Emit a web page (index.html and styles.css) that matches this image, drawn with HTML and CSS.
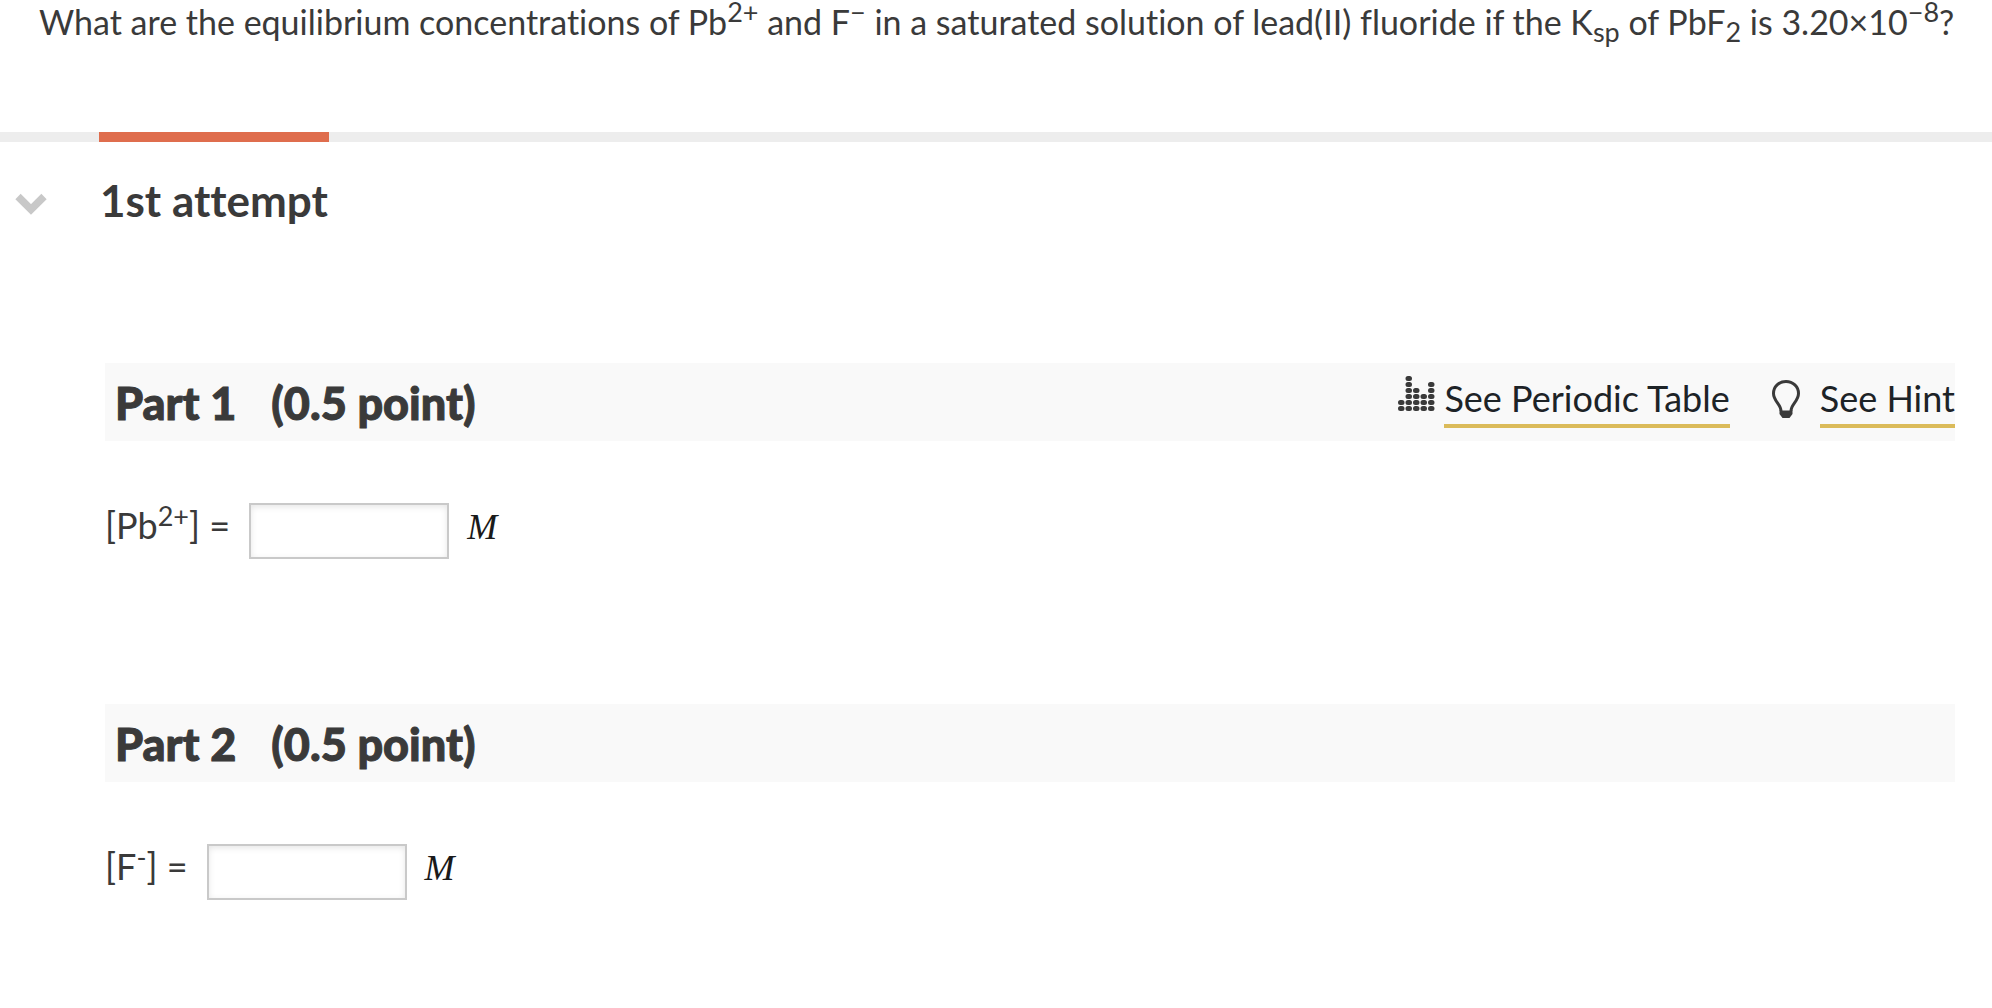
FILE: index.html
```html
<!DOCTYPE html>
<html lang="en">
<head>
<meta charset="utf-8">
<title>Solubility equilibrium question</title>
<link rel="stylesheet" href="styles.css">
</head>
<body>
<main>
  <p class="question">What are the equilibrium concentrations of Pb<sup>2+</sup> and F<sup>−</sup> in a saturated solution of lead(II) fluoride if the K<sub>sp</sub> of PbF<sub>2</sub> is 3.20×10<sup>−8</sup>?</p>

  <section class="attempt">
    <header class="attempt-header">
      <button class="toggle" type="button" aria-label="Collapse attempt" aria-expanded="true">
        <svg width="32" height="22" viewBox="0 0 32 22" aria-hidden="true"><path d="M3 3.5 16 16.500 29 3.500" fill="none" stroke="#c8c8c8" stroke-width="7.500"/></svg>
      </button>
      <h2 class="attempt-title">1st attempt</h2>
    </header>

    <section class="part">
      <header class="part-header">
        <h3 class="part-title"><span>Part 1</span><span>(0.5 point)</span></h3>
        <nav class="tools">
          <span class="tool">
            <svg class="table-icon" width="37" height="36" viewBox="0 0 37 36" aria-hidden="true">
              <g fill="none" stroke="#3a3a3a" stroke-width="5" stroke-linecap="round">
                <path d="M2.500 33.500H4M2.500 27.500H4M10 33.500H11.500M10 27.500H11.500M10 21.500H11.500M10 15.500H11.500M10 9.500H11.500M10 3.500H11.500M17.500 33.500H19M17.500 27.500H19M17.500 21.500H19M17.500 15.500H19M25 33.500H26.500M25 27.500H26.500M25 21.500H26.500M32.500 33.500H34M32.500 27.500H34M32.500 21.500H34M32.500 15.500H34M32.500 9.500H34"/>
              </g>
            </svg>
            <a class="tool-link" href="#periodic-table">See Periodic Table</a>
          </span>
          <span class="tool">
            <svg class="hint-icon" width="28" height="38" viewBox="0 0 28 38" aria-hidden="true">
              <path d="M9 31C9 24.500 1.500 21 1.500 13.500 1.500 6.500 7 1.500 14 1.500S26.500 6.500 26.500 13.500C26.500 21 19 24.500 19 31" fill="none" stroke="#3a3a3a" stroke-width="3"/>
              <path d="M7.500 30.500H20.500V34L17.500 38H10.500L7.500 34Z" fill="#3a3a3a"/>
            </svg>
            <a class="tool-link" href="#hint">See Hint</a>
          </span>
        </nav>
      </header>
      <div class="answer">
        <label for="lead">[Pb<sup>2+</sup>] =</label>
        <input class="answer-box" id="lead" type="text">
        <span class="unit">M</span>
      </div>
    </section>

    <section class="part">
      <header class="part-header">
        <h3 class="part-title"><span>Part 2</span><span>(0.5 point)</span></h3>
      </header>
      <div class="answer">
        <label for="fluoride">[F<sup>-</sup>] =</label>
        <input class="answer-box" id="fluoride" type="text">
        <span class="unit">M</span>
      </div>
    </section>
  </section>
</main>
</body>
</html>
```
FILE: styles.css
```css
* {
  box-sizing: border-box;
}

body {
  margin: 0;
  background: #fff;
  color: #3a3a3a;
  font-family: Lato, sans-serif;
  font-size: 36px;
  font-variant-ligatures: none;
  line-height: 44px;
}

h2,
h3,
p {
  margin: 0;
}

sup,
sub {
  font-size: 27px;
  line-height: 0;
}

sup {
  vertical-align: 13px;
}

sub {
  vertical-align: -7px;
}

.question {
  padding: 0 0 88px 39px;
  font-size: 34px;
}

.attempt-header {
  display: flex;
  background: linear-gradient(#ededed, #ededed) top / 100% 10px no-repeat;
}

.toggle {
  display: flex;
  width: 99px;
  padding: 61px 0 0 15px;
  border: 0;
  background: none;
  cursor: pointer;
}

.attempt-title {
  padding: 30px 1px 0;
  border-top: 10px solid #df6d4d;
  font-size: 44px;
  font-weight: 700;
  line-height: 56px;
}

.part {
  margin: 135px 37px 0 105px;
}

.part + .part {
  margin-top: 145px;
}

.part-header {
  display: flex;
  justify-content: space-between;
  height: 78px;
  padding-left: 10px;
  background: #f9f9f9;
}

.part-title {
  display: flex;
  gap: 35px;
  padding-top: 12px;
  font-size: 45px;
  font-weight: 900;
  line-height: 56px;
  -webkit-text-stroke: 1px currentColor;
}

.tools {
  display: flex;
  gap: 42px;
}

.tool {
  display: flex;
  align-items: flex-start;
}

.table-icon {
  margin: 12px 9px 0 0;
}

.hint-icon {
  margin: 17px 20px 0 0;
}

.tool-link {
  margin-top: 13px;
  padding-bottom: 4px;
  border-bottom: 4px solid #dbbb5a;
  color: #1d2327;
  text-decoration: none;
}

.answer {
  display: flex;
  align-items: flex-start;
  padding-top: 62px;
}

.answer-box {
  width: 200px;
  height: 56px;
  margin: 0 18px 0 19px;
  padding: 0 10px;
  border: 2px solid #c9c9c9;
  border-radius: 0;
  box-shadow: inset 0 2px 6px rgba(0, 0, 0, 0.1);
  background: #fff;
  color: inherit;
  font: inherit;
}

.unit {
  padding-top: 2px;
  color: #1a1a1a;
  font-family: "Liberation Serif", serif;
  font-style: italic;
}
```
